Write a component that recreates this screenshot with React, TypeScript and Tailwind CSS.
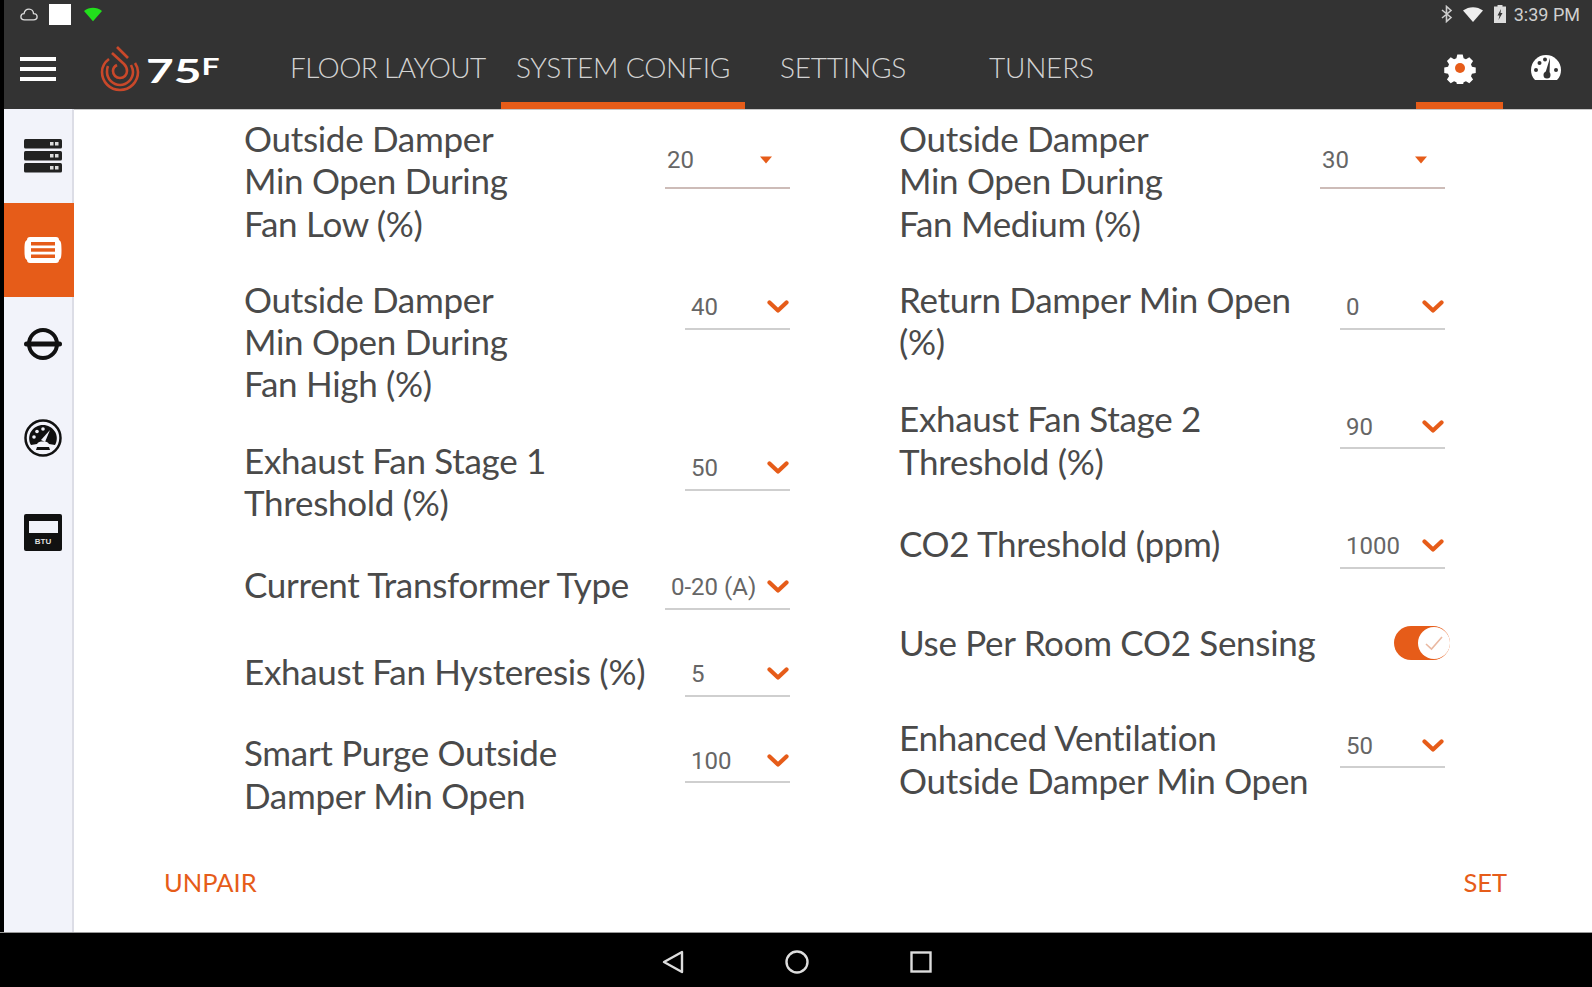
import { FunctionComponent } from "react";

const ORANGE = "#e65c19";

const Chevron = () => (
  <svg width="22" height="14" viewBox="0 0 22 14" fill="none" className="shrink-0">
    <path d="M2.5 2.5L11 10.5L19.5 2.5" stroke={ORANGE} strokeWidth="4.2" strokeLinecap="round" strokeLinejoin="round" />
  </svg>
);

const Caret = () => (
  <svg width="14" height="8" viewBox="0 0 14 8" className="shrink-0">
    <path d="M1 0.5H13L7 7.5Z" fill={ORANGE} />
  </svg>
);

const Spinner: FunctionComponent<{ value: string; box: string }> = ({ value, box }) => (
  <div className={`flex shrink-0 items-center justify-between border-b-2 border-[#cfcfcf] pr-[1px] font-['Roboto',sans-serif] text-[24px] text-[#666666] ${box}`}>
    <span>{value}</span>
    <Chevron />
  </div>
);

const CaretSpinner: FunctionComponent<{ value: string }> = ({ value }) => (
  <div className="mt-[22px] flex h-[50px] w-[125px] shrink-0 items-center justify-between border-b-2 border-[#cdbcb8] pb-[6px] pl-[2px] pr-[17px] font-['Roboto',sans-serif] text-[24px] text-[#666666]">
    <span>{value}</span>
    <Caret />
  </div>
);

const Label: FunctionComponent<{ lines: string[] }> = ({ lines }) => (
  <div className="text-[35px] leading-[42.3px] tracking-[-0.3px] text-[#4a4a4a]">
    {lines.map((l) => (
      <div key={l} className="whitespace-nowrap">{l}</div>
    ))}
  </div>
);

const Row: FunctionComponent<{ lines: string[]; value: string; className: string; center?: boolean; box?: string }> = ({
  lines,
  value,
  className,
  center,
  box = "h-[52px] w-[105px] pl-[6px] pt-[9px]",
}) => (
  <div className={`flex justify-between ${center ? "items-center" : "items-start"} ${className}`}>
    <Label lines={lines} />
    <Spinner value={value} box={box} />
  </div>
);

const Wifi = ({ color, w }: { color: string; w: number }) => (
  <svg width={w} height="15" viewBox="0 0 20 15">
    <path d="M10 15L0 3.5C6 -1 14 -1 20 3.5Z" fill={color} />
  </svg>
);

const Gear = () => (
  <svg width="32" height="32" viewBox="0 0 32 32">
    <path
      fill="#fff"
      fillRule="evenodd"
      d="M13 1h6l1 4.2 2.6 1.1 3.7-2.3 4.2 4.2-2.3 3.7 1.1 2.6 4.2 1v6l-4.2 1-1.1 2.6 2.3 3.7-4.2 4.2-3.7-2.3-2.6 1.1-1 4.2h-6l-1-4.2-2.6-1.1-3.7 2.3-4.2-4.2 2.3-3.7-1.1-2.6-4.2-1v-6l4.2-1 1.1-2.6-2.3-3.7 4.2-4.2 3.7 2.3 2.6-1.1Z"
      transform="translate(1.6 1.6) scale(0.9)"
    />
    <circle cx="16" cy="16" r="5" fill={ORANGE} />
  </svg>
);

const GaugeWhite = () => (
  <svg width="32" height="28" viewBox="0 0 32 28">
    <path d="M5 27C2 24 1 20.500 1 17A15 15 0 0 1 31 17C31 20.500 30 24 27 27Z" fill="#fff" />
    <path d="M15 21L20 5L19.500 21Z" fill="#333" />
    <circle cx="17" cy="22" r="3.500" fill="#333" />
    <circle cx="6" cy="17" r="2" fill="#333" />
    <circle cx="9.500" cy="10" r="2" fill="#333" />
    <circle cx="15" cy="6.500" r="2" fill="#333" />
    <circle cx="26" cy="17" r="2" fill="#333" />
  </svg>
);

const ServerIcon = () => (
  <svg width="38" height="34" viewBox="0 0 38 34">
    {[0, 12, 24].map((y) => (
      <g key={y}>
        <rect x="0" y={y} width="38" height="9.500" rx="1.500" fill="#222" />
        <rect x="26" y={y + 3} width="3.500" height="3.500" fill="#ddd" />
        <rect x="31" y={y + 3} width="3.500" height="3.500" fill="#ddd" />
      </g>
    ))}
  </svg>
);

const ActiveIcon = () => (
  <svg width="38" height="28" viewBox="0 0 38 28">
    <path d="M6 1H32C34 1 35 2 35 4C37 5 37.500 7 37.500 14C37.500 21 37 23 35 24C35 26 34 27 32 27H6C4 27 3 26 3 24C1 23 .5 21 .5 14C.5 7 1 5 3 4C3 2 4 1 6 1Z" fill="#fff" />
    <rect x="7" y="6" width="24" height="3.500" fill={ORANGE} />
    <rect x="7" y="12.200" width="24" height="3.500" fill={ORANGE} />
    <rect x="7" y="18.500" width="24" height="3.500" fill={ORANGE} />
  </svg>
);

const DamperIcon = () => (
  <svg width="38" height="32" viewBox="0 0 38 32">
    <circle cx="19" cy="16" r="14" fill="none" stroke="#111" strokeWidth="4" />
    <rect x="0" y="13.500" width="38" height="5" rx="2.500" fill="#111" />
  </svg>
);

const GaugeIcon = () => (
  <svg width="38" height="38" viewBox="0 0 38 38">
    <circle cx="19" cy="19" r="17.500" fill="none" stroke="#111" strokeWidth="2.500" />
    <path d="M7 26C4.500 22 4.500 16 7.500 12C10 8.500 14 6 19 6C24 6 28 8.500 30.500 12C33.500 16 33.500 22 31 26L25 25C24 23 22 22.500 19 22.500C16 22.500 14 23 13 25Z" fill="#111" />
    <path d="M13 28H25L26 31H12Z" fill="#111" />
    <path d="M17 21L26 11L21 23Z" fill="#f2f3fa" />
    <circle cx="10" cy="18" r="1.800" fill="#f2f3fa" />
    <circle cx="13" cy="12.500" r="1.800" fill="#f2f3fa" />
    <circle cx="19" cy="10" r="1.800" fill="#f2f3fa" />
  </svg>
);

const BtuIcon = () => (
  <div className="flex h-[37px] w-[38px] flex-col items-center rounded-[2px] bg-[#111] pt-[7px]">
    <div className="h-[12px] w-[29px] bg-[#f2f3fa]" />
    <div className="mt-[4px] font-['Liberation_Sans',sans-serif] text-[8px] leading-[9px] font-bold text-[#ddd]">BTU</div>
  </div>
);

const sideItems = [
  { icon: <ServerIcon />, active: false },
  { icon: <ActiveIcon />, active: true },
  { icon: <DamperIcon />, active: false },
  { icon: <GaugeIcon />, active: false },
  { icon: <BtuIcon />, active: false },
];

export default function App() {
  return (
    <div className="flex h-[987px] w-[1592px] flex-col overflow-hidden bg-black pl-1 font-['Lato',sans-serif]">
      <header className="h-[110px] shrink-0 border-b border-[#c8c8c8] bg-[#333333]">
        <div className="flex h-[28px] items-center pl-4 pr-3">
          <svg width="18" height="13" viewBox="0 0 20 14" fill="none">
            <path d="M5 13C2.500 13 1 11.500 1 9.500C1 7.500 2.500 6 4.500 6C5 3 7.500 1 10 1C13 1 15 3.500 15 6C17.500 6 19 7.500 19 9.500C19 11.500 17.500 13 15 13Z" stroke="#ddd" strokeWidth="1.500" />
          </svg>
          <div className="ml-[11px] h-[21px] w-[22px] bg-white" />
          <div className="ml-[13px]">
            <Wifi color="#22e01c" w={18} />
          </div>
          <div className="ml-auto flex items-center">
            <svg width="12" height="18" viewBox="0 0 12 18" fill="none">
              <path d="M1 5L10 12.500L5.500 16.500V1.500L10 5.500L1 13" stroke="#ccc" strokeWidth="1.600" />
            </svg>
            <div className="ml-[9px]">
              <Wifi color="#eeeeee" w={22} />
            </div>
            <svg className="ml-[10px]" width="12" height="18" viewBox="0 0 12 18">
              <path d="M3.500 0H8.500V1.500H12V18H0V1.500H3.500Z" fill="#ddd" />
              <path d="M7 4L3.500 10.500H5.500L4.500 15L8.500 8H6.500Z" fill="#333" />
            </svg>
            <span className="ml-[8px] font-['Roboto',sans-serif] text-[18px] text-[#cfcfcf]">3:39 PM</span>
          </div>
        </div>
        <nav className="flex h-[81px]">
          <div className="mt-[29px] ml-4 flex h-[24px] w-[36px] shrink-0 flex-col justify-between">
            <div className="h-[4px] bg-white" />
            <div className="h-[4px] bg-white" />
            <div className="h-[4px] bg-white" />
          </div>
          <div className="mt-[18px] ml-[44px] flex h-[48px] w-[170px] shrink-0 items-start">
            <svg width="40" height="46" viewBox="0 0 40 46" fill="none" stroke="#c9482a" strokeWidth="2.600">
              <path d="M17 1L28 12" />
              <path d="M12 7L24 18C26 20 27 22 27 25C27 29 24 32 20 32C16 32 13 29 13 25C13 22 15 20 17 19" />
              <path d="M9 13C5 16 2 20 2 26C2 36 10 44 20 44C30 44 38 36 38 26C38 22 37 20 35 17" />
              <path d="M8 20C7 22 7 24 7 26C7 33 13 39 20 39C27 39 33 33 33 26C33 23 32 21 31 19" />
            </svg>
            <div className="mt-[8px] ml-[6px] flex origin-left scale-x-[1.45] items-start text-white">
              <span className="text-[33px] leading-[32px] font-bold">75</span>
              <span className="mt-[2px] text-[22px] leading-[22px] font-bold">F</span>
            </div>
          </div>
          <div className="ml-[20px] flex h-full whitespace-nowrap text-[28px] font-light tracking-[-0.2px] text-[#d2d2d2]">
            <div className="flex h-full w-[211px] items-center pb-[4px] tracking-[-0.6px]">FLOOR LAYOUT</div>
            <div className="flex h-full w-[244px] items-center justify-center border-b-[7px] border-[#e65c19] pt-[3px]">SYSTEM CONFIG</div>
            <div className="flex h-full w-[244px] items-center pb-[4px] pl-[35px]">SETTINGS</div>
            <div className="flex h-full items-center pb-[4px]">TUNERS</div>
          </div>
          <div className="ml-auto flex h-full">
            <div className="flex h-full w-[87px] items-center justify-center border-b-[7px] border-[#e65c19] pt-[5px]">
              <Gear />
            </div>
            <div className="ml-[27px] mr-[30px] flex h-full w-[32px] items-center pb-[3px]">
              <GaugeWhite />
            </div>
          </div>
        </nav>
      </header>

      <div className="flex h-[822px] shrink-0 bg-white">
        <aside className="mt-[-1px] w-[70px] shrink-0 border-r-2 border-[#dcdde6] bg-[#f2f3fa]">
          {sideItems.map((item, i) => (
            <div key={i} className={`flex h-[94px] items-center pl-[20px] ${item.active ? "mr-[-2px] bg-[#e65c19]" : ""}`}>
              {item.icon}
            </div>
          ))}
        </aside>

        <main className="flex-1">
          <div className="flex h-[713px] pt-[7px] pl-[170px]">
            <section className="w-[546px]">
              <div className="flex items-start justify-between">
                <Label lines={["Outside Damper", "Min Open During", "Fan Low (%)"]} />
                <CaretSpinner value="20" />
              </div>
              <Row className="mt-[34px]" lines={["Outside Damper", "Min Open During", "Fan High (%)"]} value="40" />
              <Row className="mt-[34px]" lines={["Exhaust Fan Stage 1", "Threshold (%)"]} value="50" />
              <Row className="mt-[35.5px]" center lines={["Current Transformer Type"]} value="0-20 (A)" box="h-[51px] w-[125px] pl-[6px] pt-[8px]" />
              <Row className="mt-[36px]" center lines={["Exhaust Fan Hysteresis (%)"]} value="5" box="h-[51px] w-[105px] pl-[6px] pt-[8px]" />
              <Row className="mt-[34.5px]" lines={["Smart Purge Outside", "Damper Min Open"]} value="100" />
            </section>
            <section className="ml-[109px] w-[546px]">
              <div className="flex items-start justify-between">
                <Label lines={["Outside Damper", "Min Open During", "Fan Medium (%)"]} />
                <CaretSpinner value="30" />
              </div>
              <Row className="mt-[34px]" lines={["Return Damper Min Open", "(%)"]} value="0" />
              <Row className="mt-[35px]" lines={["Exhaust Fan Stage 2", "Threshold (%)"]} value="90" />
              <Row className="mt-[35.5px]" center lines={["CO2 Threshold (ppm)"]} value="1000" box="h-[51px] w-[105px] pl-[6px] pt-[8px]" />
              <div className="mt-[52.5px] flex items-center justify-between">
                <Label lines={["Use Per Room CO2 Sensing"]} />
                <div className="mt-[2px] mr-[-5px] flex h-[34px] w-[56px] items-center justify-end rounded-full bg-[#e65c19]">
                  <div className="flex h-[32px] w-[32px] items-center justify-center rounded-full bg-white">
                    <svg width="20" height="16" viewBox="0 0 20 16" fill="none">
                      <path d="M2 9L7.500 14L18 2" stroke="#eab9a2" strokeWidth="1.600" />
                    </svg>
                  </div>
                </div>
              </div>
              <Row className="mt-[53px]" lines={["Enhanced Ventilation", "Outside Damper Min Open"]} value="50" />
            </section>
          </div>
          <div className="flex items-center justify-between pt-[40px] pl-[90px] pr-[85px] text-[25.500px] text-[#e65c19]">
            <span>UNPAIR</span>
            <span>SET</span>
          </div>
        </main>
      </div>

      <footer className="ml-[-4px] flex flex-1 items-center border-t border-[#999] bg-black pt-[4px] pl-[662px]">
        <svg width="22" height="24" viewBox="0 0 22 24" fill="none">
          <path d="M20 2V22L2 12Z" stroke="#ddd" strokeWidth="2.400" strokeLinejoin="round" />
        </svg>
        <svg className="ml-[101px]" width="24" height="24" viewBox="0 0 24 24" fill="none">
          <circle cx="12" cy="12" r="10.500" stroke="#ddd" strokeWidth="2.400" />
        </svg>
        <svg className="ml-[101px]" width="22" height="22" viewBox="0 0 22 22" fill="none">
          <rect x="1.500" y="1.500" width="19" height="19" stroke="#ddd" strokeWidth="2.400" />
        </svg>
      </footer>
    </div>
  );
}
